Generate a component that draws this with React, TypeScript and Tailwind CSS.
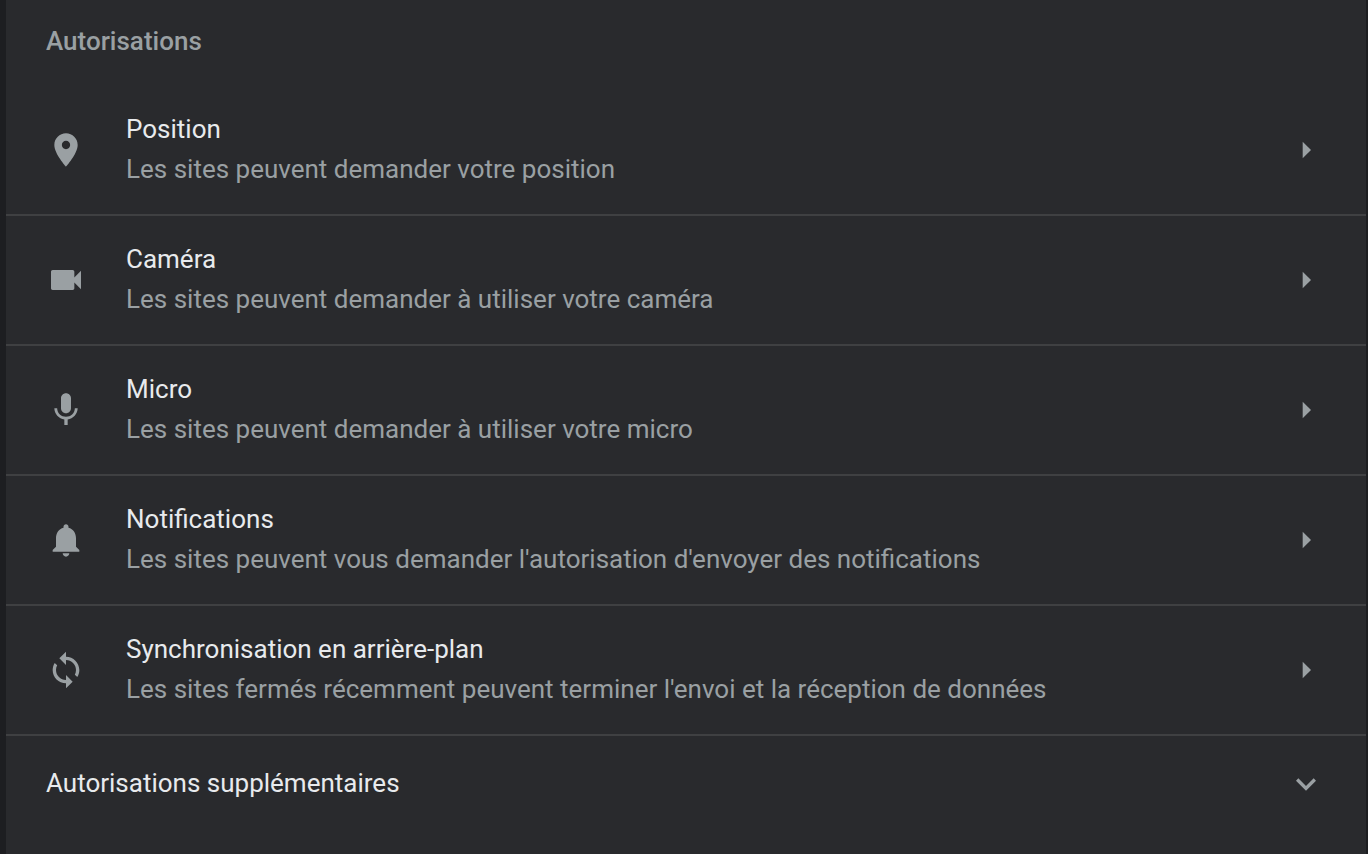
import { useState } from "react";

const permissions = [
  {
    id: "location",
    title: "Position",
    description: "Les sites peuvent demander votre position",
    icon: "M12 2C8.13 2 5 5.13 5 9c0 5.25 7 13 7 13s7-7.75 7-13c0-3.87-3.13-7-7-7zm0 9.5c-1.38 0-2.5-1.12-2.5-2.5s1.12-2.5 2.5-2.5 2.5 1.12 2.5 2.5-1.12 2.5-2.5 2.5z",
  },
  {
    id: "camera",
    title: "Caméra",
    description: "Les sites peuvent demander à utiliser votre caméra",
    icon: "M17 10.5V7c0-.55-.45-1-1-1H4c-.55 0-1 .45-1 1v10c0 .55.45 1 1 1h12c.55 0 1-.45 1-1v-3.5l4 4v-11l-4 4z",
  },
  {
    id: "microphone",
    title: "Micro",
    description: "Les sites peuvent demander à utiliser votre micro",
    icon: "M12 14c1.66 0 2.99-1.34 2.99-3L15 5c0-1.66-1.34-3-3-3S9 3.34 9 5v6c0 1.66 1.34 3 3 3zm5.3-3c0 3-2.54 5.1-5.3 5.1S6.7 14 6.7 11H5c0 3.41 2.72 6.23 6 6.72V21h2v-3.28c3.28-.48 6-3.3 6-6.72h-1.7z",
  },
  {
    id: "notifications",
    title: "Notifications",
    description: "Les sites peuvent vous demander l'autorisation d'envoyer des notifications",
    icon: "M12 22c1.1 0 2-.9 2-2h-4c0 1.1.89 2 2 2zm6-6v-5c0-3.07-1.64-5.64-4.5-6.32V4c0-.83-.67-1.5-1.5-1.5s-1.5.67-1.5 1.5v.68C7.63 5.36 6 7.92 6 11v5l-2 2v1h16v-1l-2-2z",
  },
  {
    id: "background-sync",
    title: "Synchronisation en arrière-plan",
    description: "Les sites fermés récemment peuvent terminer l'envoi et la réception de données",
    icon: "M12 4V1L8 5l4 4V6c3.31 0 6 2.69 6 6 0 1.01-.25 1.97-.7 2.8l1.46 1.46C19.54 15.03 20 13.57 20 12c0-4.42-3.58-8-8-8zm0 14c-3.31 0-6-2.69-6-6 0-1.01.25-1.97.7-2.8L5.24 7.74C4.46 8.97 4 10.43 4 12c0 4.42 3.58 8 8 8v3l4-4-4-4v3z",
  },
];

function Icon({ path, className }: { path: string; className: string }) {
  return (
    <svg viewBox="0 0 24 24" fill="currentColor" aria-hidden="true" className={className}>
      <path d={path} />
    </svg>
  );
}

export default function App() {
  const [expanded, setExpanded] = useState(false);

  return (
    <div className="min-h-screen bg-[#1d1e21] pl-[6px] pr-[2px] flex font-[Roboto,sans-serif] text-[26px] leading-[40px]">
      <main className="flex-1 bg-[#292a2d]">
        <h2 className="px-10 pt-[21px] pb-[25px] font-medium text-[#9aa0a3]">Autorisations</h2>

        <ul>
          {permissions.map((permission) => (
            <li key={permission.id} className="border-b-2 border-[#3f4042]">
              <button type="button" className="w-full h-32 px-10 flex items-center gap-10 text-left">
                <Icon path={permission.icon} className="size-10 shrink-0 text-[#9aa0a3]" />
                <span className="flex-1 min-w-0 pb-0.5">
                  <span className="block text-[#e8eaed]">{permission.title}</span>
                  <span className="block text-[#9aa0a3]">{permission.description}</span>
                </span>
                <Icon path="M10 7l5 5-5 5z" className="size-10 shrink-0 text-[#9aa0a3]" />
              </button>
            </li>
          ))}
        </ul>

        <button
          type="button"
          aria-expanded={expanded}
          onClick={() => setExpanded(!expanded)}
          className="w-full h-24 px-10 flex items-center justify-between text-left text-[#e8eaed]"
        >
          <span className="pb-0.5">Autorisations supplémentaires</span>
          <Icon
            path={
              expanded
                ? "M12 8l-6 6 1.41 1.41L12 10.83l4.59 4.58L18 14z"
                : "M16.59 8.59L12 13.17 7.41 8.59 6 10l6 6 6-6z"
            }
            className="size-10 shrink-0 text-[#9aa0a3]"
          />
        </button>
      </main>
    </div>
  );
}
